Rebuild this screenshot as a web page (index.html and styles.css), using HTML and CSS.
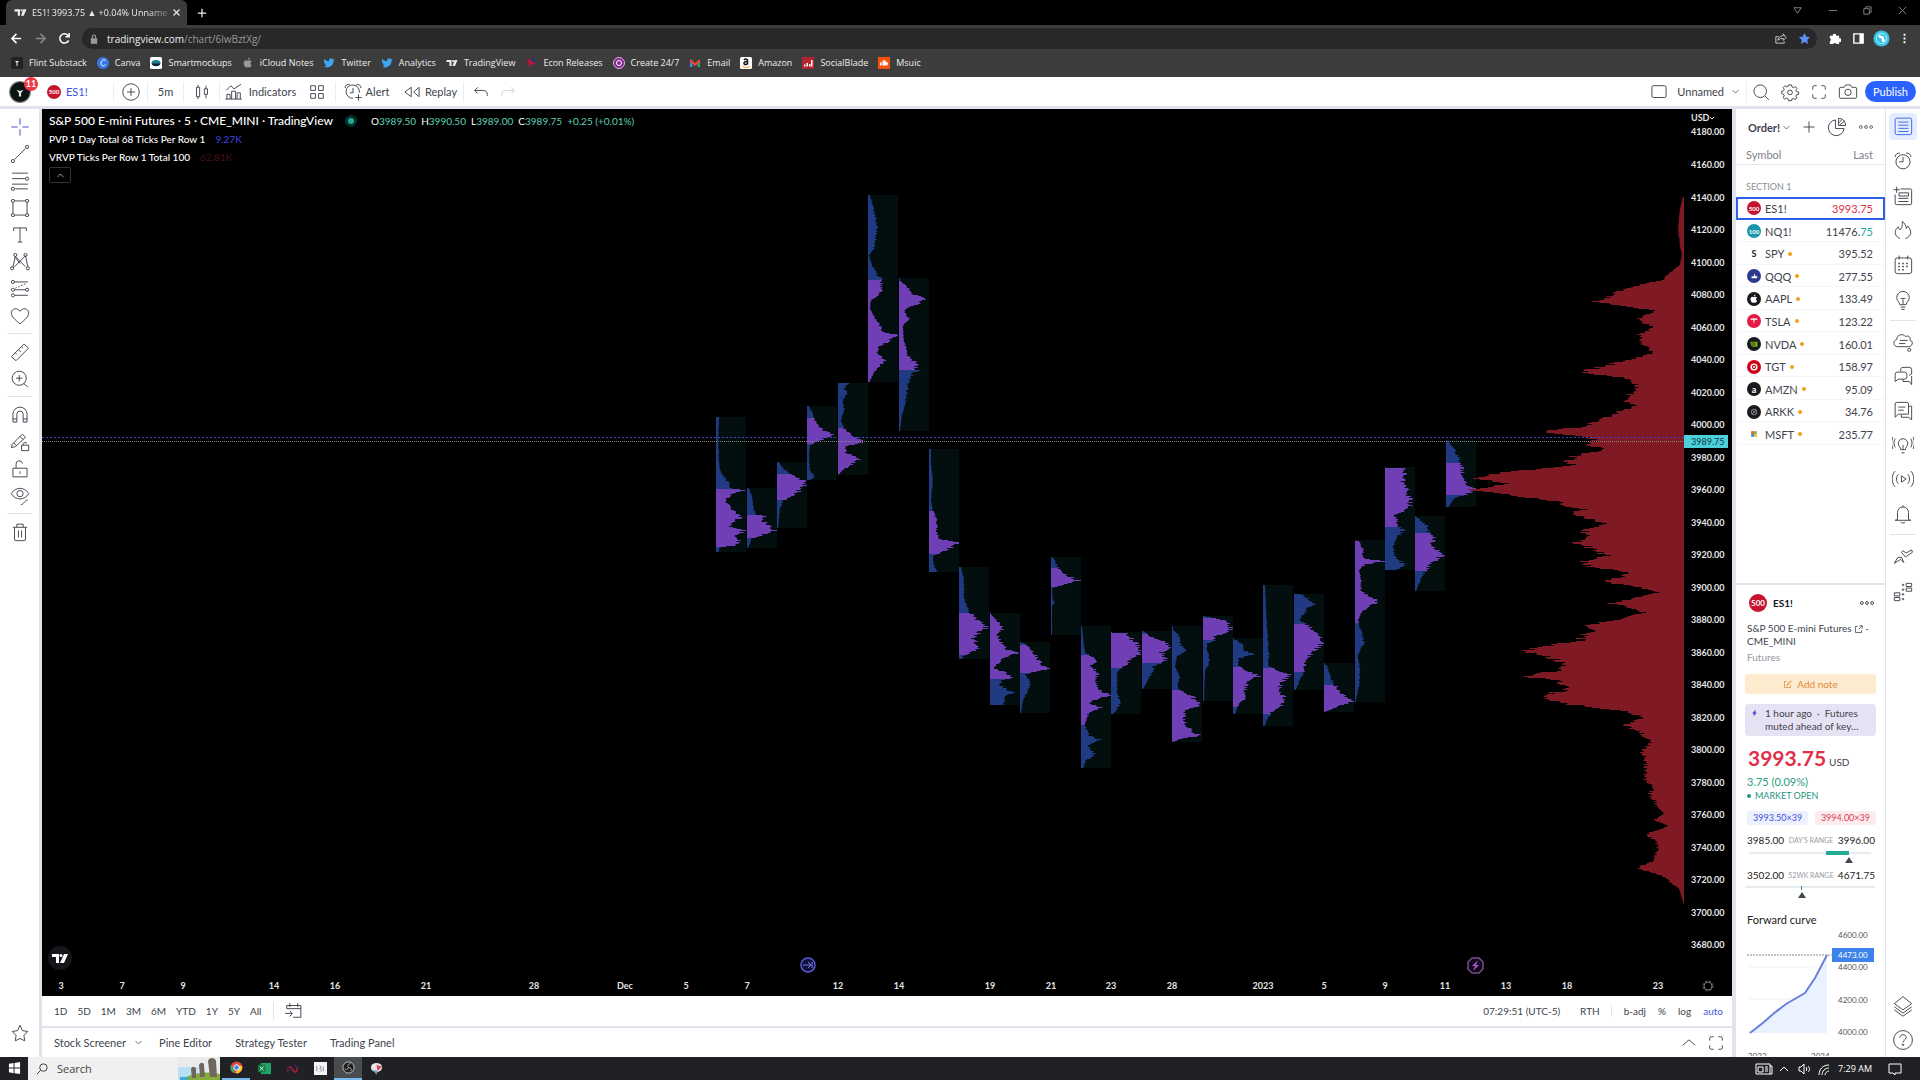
FILE: index.html
```
<!DOCTYPE html>
<html lang="en">
<head>
    <meta charset="UTF-8">
    <meta name="viewport" content="width=device-width, initial-scale=1.0">
    <title>ES1! 3993.75 ▲ +0.04% Unnamed</title>
    <link rel="stylesheet" href="styles.css">
</head>
<body>
    <!-- shared icons -->
    <svg class="defs" aria-hidden="true">
        <symbol id="tv" viewBox="0 0 24 24"><path fill="currentColor" d="M1 6h10v12H7v-8H1zM17 6h6l-5 12h-5z"/><circle cx="14" cy="8" r="2" fill="currentColor"/></symbol>
        <symbol id="bird" viewBox="0 0 24 24"><path fill="#3ea6f2" d="M23 5c-1 .4-1.700.6-2.600.7 1-.6 1.600-1.400 2-2.500-.9.5-1.800.9-2.900 1.100A4.500 4.500 0 0 0 11.800 8.500C8 8.300 4.600 6.500 2.300 3.700c-1.200 2-.6 4.700 1.400 6-.7 0-1.400-.2-2-.6 0 2.200 1.500 4.100 3.600 4.500-.7.200-1.300.2-2 .1.600 1.800 2.200 3.100 4.200 3.100A9 9 0 0 1 1 18.700 13 13 0 0 0 21 7.300c.8-.6 1.500-1.400 2-2.300z"/></symbol>
        <symbol id="apple" viewBox="0 0 24 24"><path fill="currentColor" d="M17 13c0-3 2-4 2.500-4.500-1.500-2-3.500-2.200-4.500-2.200-1.500 0-2.500 1-3.500 1s-2-1-3.500-1C5.500 6.300 3.500 8.500 3.500 12s2.500 9 5 9c1.200 0 1.800-.9 3.200-.9 1.500 0 1.900.9 3.200.9 2 0 3.600-3 4.300-5-1.200-.5-2.200-1.500-2.200-3zM14.500 4.500C15.300 3.500 15.500 2 15.400 1c-1.500.2-3.400 1.500-3.400 4.200 1 .1 2-.3 2.500-.7z"/></symbol>
        <symbol id="chevron" viewBox="0 0 12 12"><path d="M2 4l4 4 4-4"/></symbol>
        <symbol id="full" viewBox="0 0 28 28"><path d="M6 11V8a2 2 0 0 1 2-2h3M17 6h3a2 2 0 0 1 2 2v3M22 17v3a2 2 0 0 1-2 2h-3M11 22H8a2 2 0 0 1-2-2v-3"/></symbol>
        <symbol id="gear" viewBox="0 0 28 28"><path d="M12 5h4l.6 2.700 1.900.8L20.900 7 23 9.500l-1.500 2.300.6 1.700L25 14v3l-2.900.6-.8 1.700 1.500 2.300-2.500 2.100-2.200-1.500-1.700.7L16 25h-4l-.5-2.500-1.800-.7-2.300 1.400-2.200-2.200 1.500-2.200-.8-1.800L3.500 16v-3l2.400-.7.8-1.700L5.200 8.300 7.500 6l2.200 1.500 1.800-.7z"/><circle cx="14" cy="14.500" r="3"/></symbol>
        <symbol id="dots" viewBox="0 0 28 28"><circle cx="6" cy="14" r="2.200"/><circle cx="14" cy="14" r="2.200"/><circle cx="22" cy="14" r="2.200"/></symbol>
        <symbol id="bolt" viewBox="0 0 12 12"><path fill="currentColor" stroke="none" d="M8 0L2 7h3l-1 5 6-7H7z"/></symbol>
    </svg>

    <header class="tabs">
        <div class="tab">
            <svg class="favicon"><use href="#tv"/></svg>
            <span class="tab-title">ES1! 3993.75 ▲ +0.04% Unname</span>
            <button class="tab-close" aria-label="Close tab"><svg viewBox="0 0 12 12"><path d="M2 2l8 8M10 2l-8 8"/></svg></button>
        </div>
        <button class="tab-new" aria-label="New tab"><svg viewBox="0 0 12 12"><path d="M6 1v10M1 6h10"/></svg></button>
        <div class="window-controls">
            <svg viewBox="0 0 12 12"><path d="M2 3h8L6 9z"/></svg>
            <svg viewBox="0 0 12 12"><path d="M2 6h9"/></svg>
            <svg viewBox="0 0 12 12"><path d="M2 4h6v6H2zM4 4V2h6v6H8"/></svg>
            <svg viewBox="0 0 12 12"><path d="M2 2l8 8M10 2l-8 8"/></svg>
        </div>
    </header>

    <div class="nav">
        <svg class="nav-icon" viewBox="0 0 14 14"><path d="M12 7H2M7 2L2 7l5 5"/></svg>
        <svg class="nav-icon off" viewBox="0 0 14 14"><path d="M2 7h10M7 2l5 5-5 5"/></svg>
        <svg class="nav-icon" viewBox="0 0 14 14"><path d="M11.500 9A5 5 0 1 1 11 4M12 1v4H8"/></svg>
        <div class="omnibox">
            <svg class="lock" viewBox="0 0 10 12"><path fill="#999" d="M1 5h8v7H1z"/><path fill="none" stroke="#999" stroke-width="1.500" d="M3 5V3a2 2 0 0 1 4 0v2"/></svg>
            <a href="#">tradingview.com<span>/chart/6lwBztXg/</span></a>
            <svg class="share" viewBox="0 0 14 14"><path d="M5 5H2v7h9v-2M4 9c1-4 4-5 6-5V2l3 4-3 3V7C8 7 6 7 4 9z"/></svg>
            <svg class="star" viewBox="0 0 14 14"><path fill="#5b8ff0" d="M7 1l2 4 4 .5-3 3 .8 4.500L7 10.900 3.200 13 4 8.500l-3-3L5 5z"/></svg>
        </div>
        <svg class="ext" viewBox="0 0 14 14"><path fill="#fff" d="M2 4h3a2 2 0 1 1 4 0h3v3a2 2 0 1 1 0 3.500V13H9a2 2 0 0 0-3.500 0H2v-3a2 2 0 0 0 0-3.500z"/></svg>
        <svg class="ext" viewBox="0 0 14 14"><path fill="none" stroke="#fff" stroke-width="1.500" d="M2 2h10v10H2z"/><path fill="#fff" d="M8 2h4v10H8z"/></svg>
        <svg class="profile" viewBox="0 0 18 18"><circle cx="9" cy="9" r="8.500" fill="#35c3e8"/><circle cx="9" cy="9" r="5.500" fill="none" stroke="#bff0fc"/><path fill="#fff" d="M6 5l5 2 2 5-3 1-1-4-3-1z"/></svg>
        <svg class="ext" viewBox="0 0 14 14"><path fill="#fff" d="M6 2h2v2H6zM6 6h2v2H6zM6 10h2v2H6z"/></svg>
    </div>

    <nav class="bookmarks">
        <a href="#"><svg viewBox="0 0 24 24"><rect width="24" height="24" rx="3" fill="#222"/><path fill="#eee" d="M8 8h8l-3 3v7h-2v-7z"/></svg>Flint Substack</a>
        <a href="#"><svg viewBox="0 0 24 24"><circle cx="12" cy="12" r="12" fill="#3577e8"/><path fill="none" stroke="#fff" stroke-width="2" d="M17 8c-2-5-9-2-9 5 0 6 6 6 9 2"/></svg>Canva</a>
        <a href="#"><svg viewBox="0 0 24 24"><rect width="24" height="24" rx="3" fill="#fff"/><ellipse cx="12" cy="12" rx="9" ry="6" fill="#1b7f93"/><path fill="#123" d="M3 13h18c-3 7-15 7-18 0z"/></svg>Smartmockups</a>
        <a href="#"><svg class="gray"><use href="#apple"/></svg>iCloud Notes</a>
        <a href="#"><svg><use href="#bird"/></svg>Twitter</a>
        <a href="#"><svg><use href="#bird"/></svg>Analytics</a>
        <a href="#"><svg><use href="#tv"/></svg>TradingView</a>
        <a href="#"><svg viewBox="0 0 24 24"><path fill="#c4122f" d="M3 3l9 4 8-5-2 8 5 5-9-1-5 7-1-8-6-4 6-1z"/><path fill="#24367a" d="M14 3h7v8h-7z"/></svg>Econ Releases</a>
        <a href="#"><svg viewBox="0 0 24 24"><circle cx="12" cy="12" r="11" fill="#7d2b8c" stroke="#f0a6e8" stroke-width="2"/><circle cx="12" cy="12" r="5" fill="none" stroke="#fff" stroke-width="2"/></svg>Create 24/7</a>
        <a href="#"><svg viewBox="0 0 24 24"><path fill="#4285f4" d="M2 6h5v14H2z"/><path fill="#34a853" d="M17 6h5v14h-5z"/><path fill="#ea4335" d="M2 4l10 8 10-8v6l-10 8L2 10z"/></svg>Email</a>
        <a href="#"><svg viewBox="0 0 24 24"><rect width="24" height="24" rx="3" fill="#fff"/><path fill="none" stroke="#111" stroke-width="3" d="M8 6c2-3 7-3 7 1v8M15 9c-8-1-9 6-4 6 3 0 4-2 4-3"/><path fill="none" stroke="#f7a01c" stroke-width="2" d="M4 18c5 4 11 4 16 0"/></svg>Amazon</a>
        <a href="#"><svg viewBox="0 0 24 24"><rect width="24" height="24" fill="#b3262f"/><path fill="#fff" d="M4 15h3v4H4zM9 12h3v7H9zM14 14h3v5h-3zM18 6h3v13h-3z"/></svg>SocialBlade</a>
        <a href="#"><svg viewBox="0 0 24 24"><rect width="24" height="24" fill="#f8510c"/><path fill="#fff" d="M4 11h2v6H4zM7 9h2v8H7zM10 7c5-2 6 2 6 3 5-1 5 7 1 7h-7z"/></svg>Msuic</a>
    </nav>

    <div class="toolbar">
        <div class="user"><svg viewBox="0 0 20 20"><circle cx="10" cy="10" r="9.500" fill="#0c1413" stroke="#888"/><path fill="#dfe5e2" d="M7 8l3 1 3-1-2 3v3H9v-3z"/></svg><b>11</b></div>
        <button class="symbol"><i class="logo red">500</i>ES1!</button>
        <button class="w34 sep-l"><svg class="icon" viewBox="0 0 28 28"><circle cx="14" cy="14" r="10.500"/><path d="M14 9v10M9 14h10"/></svg></button>
        <button class="w36 sep-l">5m</button>
        <button class="w36 sep-l"><svg class="icon" viewBox="0 0 28 28"><path d="M7 8h4v12H7zM9 5v3M9 20v3M17 10h4v7h-4zM19 6v4M19 17v5"/></svg></button>
        <button class="w80 sep-l"><svg class="icon" viewBox="0 0 28 28"><path d="M5 23v-6h4v6M11 23V13h5v10M18 23V15h4v8M3 23h21M4 12l6-6 4 4 9-6"/></svg>Indicators</button>
        <button class="w36"><svg class="icon" viewBox="0 0 28 28"><path d="M6 6h6v6H6zM16 6h6v6h-6zM6 16h6v6H6zM16 16h6v6h-6z"/></svg></button>
        <button class="w60 sep-l"><svg class="icon" viewBox="0 0 28 28"><path d="M14 22a8.500 8.500 0 1 1 8-7M14 9v6h-4M4 9a4 4 0 0 1 6-4M18 5a4 4 0 0 1 6 4M21 17v8M17 21h8"/></svg>Alert</button>
        <button class="w68"><svg class="icon" viewBox="0 0 28 28"><path d="M13 8v12l-8-6zM23 8v12l-7-6z"/></svg>Replay</button>
        <button class="w34 sep-l"><svg class="icon" viewBox="0 0 28 28"><path d="M10 8l-4 4 4 4M6 12h11c3 0 5 2 5 5v2"/></svg></button>
        <button class="off"><svg class="icon" viewBox="0 0 28 28"><path d="M18 8l4 4-4 4M22 12H11c-3 0-5 2-5 5v2"/></svg></button>
        <span class="grow"></span>
        <button class="layout"><svg class="icon" viewBox="0 0 28 28"><rect x="5" y="6" width="18" height="15" rx="2"/></svg><span>Unnamed</span><svg class="chev"><use href="#chevron"/></svg></button>
        <button class="w29 sep-l"><svg class="icon" viewBox="0 0 28 28"><circle cx="13" cy="13" r="8"/><path d="M19 19l5 5"/></svg></button>
        <button class="w29"><svg class="icon"><use href="#gear"/></svg></button>
        <button class="w29"><svg class="icon"><use href="#full"/></svg></button>
        <button class="w29"><svg class="icon" viewBox="0 0 28 28"><path d="M5 8h4l2-3h6l2 3h4a2 2 0 0 1 2 2v10a2 2 0 0 1-2 2H5a2 2 0 0 1-2-2V10a2 2 0 0 1 2-2z"/><circle cx="14" cy="14.500" r="4"/></svg></button>
        <button class="publish">Publish</button>
    </div>

    <main class="app">
        <aside class="drawing">
            <button class="blue" aria-label="Cross"><svg class="icon" viewBox="0 0 28 28"><path d="M14 3v8M14 17v8M3 14h8M17 14h8"/></svg></button>
            <button aria-label="Trend line"><svg class="icon" viewBox="0 0 28 28"><circle cx="5" cy="23" r="2"/><circle cx="23" cy="5" r="2"/><path d="M7 21L21 7"/></svg></button>
            <button aria-label="Fib"><svg class="icon" viewBox="0 0 28 28"><path d="M4 4h20M4 11h17M4 18h20M8 24h16"/><circle cx="23" cy="11" r="2"/><circle cx="5" cy="24" r="2"/></svg></button>
            <button aria-label="Rectangle"><svg class="icon" viewBox="0 0 28 28"><path d="M7 5h14M7 23h14M5 7v14M23 7v14"/><circle cx="5" cy="5" r="2"/><circle cx="23" cy="5" r="2"/><circle cx="5" cy="23" r="2"/><circle cx="23" cy="23" r="2"/></svg></button>
            <button aria-label="Text"><svg class="icon" viewBox="0 0 28 28"><path d="M6 9V5h16v4M14 5v18M11 23h6"/></svg></button>
            <button aria-label="Pattern"><svg class="icon" viewBox="0 0 28 28"><path d="M5 21L8 7l13 13M7 20L21 6l3 14M8 8l6 8"/><circle cx="8" cy="5" r="2"/><circle cx="21" cy="5" r="2"/><circle cx="4" cy="22" r="2"/><circle cx="24" cy="22" r="2"/></svg></button>
            <button aria-label="Prediction"><svg class="icon" viewBox="0 0 28 28"><path d="M7 5h17M7 15h14M7 22h17"/><path stroke-dasharray="2 2" d="M8 13l14-6"/><circle cx="5" cy="5" r="2"/><circle cx="5" cy="15" r="2"/><circle cx="23" cy="15" r="2"/><circle cx="5" cy="22" r="2"/></svg></button>
            <button aria-label="Favourites"><svg class="icon" viewBox="0 0 28 28"><path d="M14 24C8 19 3 15 3 10c0-6 8-7 11-2 3-5 11-4 11 2 0 5-5 9-11 14z"/></svg></button>
            <hr>
            <button aria-label="Measure"><svg class="icon" viewBox="0 0 28 28"><path d="M3 20L19 4l6 5L9 25zM8 15l2 2M12 11l3 3M16 7l2 2"/></svg></button>
            <button aria-label="Zoom"><svg class="icon" viewBox="0 0 28 28"><circle cx="13" cy="13" r="9"/><path d="M19 20l5 4M13 9v8M9 13h8"/></svg></button>
            <hr>
            <button aria-label="Magnet"><svg class="icon" viewBox="0 0 28 28"><path d="M5 23V13a9 9 0 0 1 18 0v10h-5V13a4 4 0 0 0-8 0v10zM5 19h5M18 19h5"/></svg></button>
            <button aria-label="Keep drawing"><svg class="icon" viewBox="0 0 28 28"><path d="M4 17L17 4l4 4L8 20l-5 1zM6 15l4 4M14 7l4 4M16 18h9v7h-9zM18 18v-2a3 3 0 0 1 5 0"/></svg></button>
            <button aria-label="Lock"><svg class="icon" viewBox="0 0 28 28"><path d="M5 13h18v11H5zM9 13V8a4 4 0 0 1 8-1M14 17v3"/></svg></button>
            <button aria-label="Hide"><svg class="icon" viewBox="0 0 28 28"><path d="M3 11c5-9 17-9 22 0-5 9-17 9-22 0zM15 25c4 0 3-4 9-6"/><circle cx="14" cy="11" r="4"/></svg></button>
            <hr>
            <button aria-label="Delete"><svg class="icon" viewBox="0 0 28 28"><path d="M5 8h18M10 8V4h8v4M7 8v15a2 2 0 0 0 2 2h10a2 2 0 0 0 2-2V8M12 12v9M16 12v9"/></svg></button>
            <button class="fav" aria-label="Toolbar"><svg class="icon" viewBox="0 0 28 28"><path d="M14 4l3 7 7 1-5 5 1 7-6-3-6 3 1-7-5-5 7-1z"/></svg></button>
        </aside>

        <section class="center">
            <div class="chart">
                <svg id="chart" viewBox="42 109 1690 887" preserveAspectRatio="xMaxYMin meet"></svg>
                <div class="legend">
                    <p class="title">S&amp;P 500 E-mini Futures · 5 · CME_MINI · TradingView<i></i>
                        <span>O<em>3989.50</em></span><span>H<em>3990.50</em></span><span>L<em>3989.00</em></span><span>C<em>3989.75</em></span><span><em>+0.25 (+0.01%)</em></span></p>
                    <p>PVP 1 Day Total 68 Ticks Per Row 1<b class="c-blue">9.27K</b></p>
                    <p>VRVP Ticks Per Row 1 Total 100<b class="c-red">62.81K</b></p>
                    <button aria-label="Collapse"><svg><use href="#chevron"/></svg></button>
                </div>
            </div>
            <div class="ranges">
                <div class="spans"><button>1D</button><button>5D</button><button>1M</button><button>3M</button><button>6M</button><button>YTD</button><button>1Y</button><button>5Y</button><button>All</button></div>
                <button class="goto" aria-label="Go to"><svg class="icon" viewBox="0 0 28 28"><path d="M6 11V7h18v15H14M6 11h18M10 4v5M20 4v5M4 17h9M10 14l3 3-3 4"/></svg></button>
                <span class="grow"></span>
                <span>07:29:51 (UTC-5)</span><button class="rth">RTH</button><button class="badj">b-adj</button><button>%</button><button>log</button><button class="c-link">auto</button>
            </div>
            <div class="panels">
                <button>Stock Screener<svg class="chev"><use href="#chevron"/></svg></button><button>Pine Editor</button><button>Strategy Tester</button><button>Trading Panel</button>
                <span class="grow"></span>
                <svg class="icon up" viewBox="0 0 28 28"><path d="M6 17l8-7 8 7"/></svg>
                <svg class="icon"><use href="#full"/></svg>
            </div>
        </section>

        <aside class="side">
            <section class="watch">
                <div class="watch-head"><b>Order!</b><svg class="chev"><use href="#chevron"/></svg><svg class="icon plus" viewBox="0 0 28 28"><path d="M14 7v14M7 14h14"/></svg><svg class="icon" viewBox="0 0 28 28"><path d="M12 5a10 10 0 1 0 11 11H12zM16 3v9h9c0-5-4-9-9-9zM16 9l5-5M17 12l7-6"/></svg><svg class="icon more"><use href="#dots"/></svg></div>
                <table>
                    <thead>
                        <tr class="cols"><th>Symbol</th><th>Last</th></tr>
                        <tr class="section"><th colspan="2">SECTION 1</th></tr>
                    </thead>
                    <tbody>
                        <tr class="active"><td><i class="logo red">500</i>ES1!</td><td class="c-down">3993.75</td></tr>
                        <tr><td><i class="logo teal">100</i>NQ1!</td><td>11476.<span class="c-up">75</span></td></tr>
                        <tr class="dot"><td><i class="logo plain">S</i>SPY</td><td>395.52</td></tr>
                        <tr class="dot"><td><i class="logo navy"><svg viewBox="0 0 14 14"><path fill="#fff" d="M3 8l4-1V3l2 4 3 1-1 2H4z"/></svg></i>QQQ</td><td>277.55</td></tr>
                        <tr class="dot"><td><i class="logo black"><svg><use href="#apple"/></svg></i>AAPL</td><td>133.49</td></tr>
                        <tr class="dot"><td><i class="logo tsla"><svg viewBox="0 0 14 14"><path fill="#fff" d="M2 4c3-1 7-1 10 0l-1 2-3-1-1 7-1-7-3 1z"/></svg></i>TSLA</td><td>123.22</td></tr>
                        <tr class="dot"><td><i class="logo black"><svg viewBox="0 0 14 14"><path fill="#76a51b" d="M2 4h10v7H6c-3 0-4-3-4-7z"/><circle cx="6" cy="7" r="2" fill="none" stroke="#141"/></svg></i>NVDA</td><td>160.01</td></tr>
                        <tr class="dot"><td><i class="logo tgt"><svg viewBox="0 0 14 14"><circle cx="7" cy="7" r="4" fill="none" stroke="#fff" stroke-width="2"/><circle cx="7" cy="7" r="1.500" fill="#fff"/></svg></i>TGT</td><td>158.97</td></tr>
                        <tr class="dot"><td><i class="logo black">a</i>AMZN</td><td>95.09</td></tr>
                        <tr class="dot"><td><i class="logo black"><svg viewBox="0 0 14 14"><circle cx="7" cy="7" r="4" fill="none" stroke="#aaa"/><path stroke="#aaa" d="M4 10l6-6M5 5l5 4"/></svg></i>ARKK</td><td>34.76</td></tr>
                        <tr class="dot"><td><i class="logo plain"><svg viewBox="0 0 14 14"><path fill="#e8643c" d="M3 3h4v4H3z"/><path fill="#8cb54a" d="M7 3h4v4H7z"/><path fill="#4a90d9" d="M3 7h4v4H3z"/><path fill="#f5b83d" d="M7 7h4v4H7z"/></svg></i>MSFT</td><td>235.77</td></tr>
                    </tbody>
                </table>
            </section>
            <section class="detail">
                <div class="detail-head"><i class="logo red big">500</i><b>ES1!</b><svg class="icon more"><use href="#dots"/></svg></div>
                <p class="name">S&amp;P 500 E-mini Futures <svg viewBox="0 0 12 12"><path d="M5 2H2v8h8V7M7 1h4v4M11 1L6 6"/></svg> ·<br>CME_MINI</p>
                <p class="kind">Futures</p>
                <button class="note"><svg viewBox="0 0 12 12"><path d="M5 2H2v8h8V7M5 8l1-3 4-4 1 1-4 4z"/></svg>Add note</button>
                <a class="news" href="#"><svg><use href="#bolt"/></svg><span>1 hour ago &nbsp;·&nbsp; Futures<br>muted ahead of key…</span></a>
                <p class="price"><b>3993.75</b>USD</p>
                <p class="change">3.75 (0.09%)</p>
                <p class="open"><i></i>MARKET OPEN</p>
                <div class="quotes"><span class="bid">3993.50×39</span><span class="ask">3994.00×39</span></div>
                <div class="range"><b>3985.00</b><span>DAY'S RANGE</span><b>3996.00</b></div>
                <svg class="bar" viewBox="0 0 130 16"><path fill="#e8eaf0" d="M4 4h122v2H4z"/><path fill="#22ab94" d="M81 3h23v4H81z"/><path fill="#434651" d="M104 9l4 6h-8z"/></svg>
                <div class="range"><b>3502.00</b><span>52WK RANGE</span><b>4671.75</b></div>
                <svg class="bar" viewBox="0 0 130 16"><path fill="#e8eaf0" d="M0 3h130v2H0z"/><path fill="#2a9d92" d="M56 3h1v4h-1z"/><path fill="#434651" d="M57 9l4 6h-8z"/></svg>
                <h3>Forward curve</h3>
                <svg class="curve" viewBox="0 0 132 128">
                    <path class="grid" d="M4 39h66M4 71h66M4 104h66"/>
                    <path fill="#e9f2fe" d="M5 105l14-11 9-8 13-10 19-11 10-15 12-23v78z"/>
                    <path class="line" d="M5 105l14-11 9-8 13-10 19-11 10-15 12-23"/>
                    <path class="dash" d="M2 27h86"/>
                    <path fill="#3b82ea" d="M87 20h42v14H87z"/>
                    <text x="93" y="10">4600.00</text><text class="now" x="93" y="30">4473.00</text><text x="93" y="42">4400.00</text><text x="93" y="75">4200.00</text><text x="93" y="107">4000.00</text>
                    <text x="3" y="131">2023</text><text x="66" y="131">2024</text>
                </svg>
            </section>
        </aside>

        <aside class="rail">
            <div class="group first">
                <button class="on"><svg class="icon" viewBox="0 0 28 28"><rect x="4" y="4" width="21" height="21" rx="2"/><path d="M8 9h13M8 13h13M8 17h13M8 21h13"/></svg></button>
                <button><svg class="icon" viewBox="0 0 28 28"><circle cx="14" cy="15" r="9"/><path d="M14 9v6H9M4 9a5 5 0 0 1 6-5M18 4a5 5 0 0 1 6 5"/></svg></button>
                <button><svg class="icon" viewBox="0 0 28 28"><path d="M4 12v11a2 2 0 0 0 2 2h17a2 2 0 0 0 2-2V7a2 2 0 0 0-2-2H11M6 2v8M2 6h8M9 10h12v4H9zM8 17h13M8 21h13"/></svg></button>
                <button><svg class="icon" viewBox="0 0 28 28"><path d="M10 25c-8-4-7-11-2-15 1 2 1 3 2 4 4-4 3-7 3-11 4 3 5 6 5 9l2-3c6 7 5 13-3 16"/></svg></button>
                <button><svg class="icon" viewBox="0 0 28 28"><rect x="4" y="5" width="21" height="20" rx="3"/><path d="M9 2v5M20 2v5"/><path stroke-dasharray="2 3" stroke-width="2" d="M8 12h14M8 16h14M8 20h9"/></svg></button>
                <button><svg class="icon" viewBox="0 0 28 28"><path d="M10 20c0-3-4-5-4-9a8 8 0 0 1 16 0c0 4-4 6-4 9zM11 23h6M12 26h4M14 20v-7M11 12h6"/></svg></button>
            </div>
            <hr>
            <div class="group second">
                <button><svg class="icon" viewBox="0 0 28 28"><path d="M7 20c-5 0-7-8-1-9 0-7 9-8 11-4 5-2 7 2 6 5 5 1 3 8-2 8zM10 12h10M9 16h8"/><circle cx="22" cy="24" r="2"/></svg></button>
                <button><svg class="icon" viewBox="0 0 28 28"><path d="M4 21v-9a3 3 0 0 1 3-3h9a3 3 0 0 1 3 3v3a3 3 0 0 1-3 3H8zM11 8V6a3 3 0 0 1 3-3h8a3 3 0 0 1 3 3v4a3 3 0 0 1-3 3M14 18v3h8l3 4V14"/></svg></button>
                <button><svg class="icon" viewBox="0 0 28 28"><path d="M4 22V5a2 2 0 0 1 2-2h13a2 2 0 0 1 2 2v13H8zM21 8h4v17l-4-3h-9v-3M8 9h9M8 13h7"/></svg></button>
                <button><svg class="icon" viewBox="0 0 28 28"><path d="M11 20c0-3-3-5-3-8a6 6 0 0 1 12 0c0 3-3 5-3 8zM12 24h4M14 20v-6M4 6c-2 4-2 7 0 11M1 4c-2 5-2 10 0 15M24 6c2 4 2 7 0 11M27 4c2 5 2 10 0 15"/></svg></button>
                <button><svg class="icon" viewBox="0 0 28 28"><path d="M12 10l6 4-6 4zM8 8c-3 3-3 9 0 12M20 8c3 3 3 9 0 12M4 4c-5 5-5 15 0 20M24 4c5 5 5 15 0 20"/></svg></button>
                <button><svg class="icon" viewBox="0 0 28 28"><path d="M7 21V12a7 7 0 0 1 14 0v9l3 1H4zM11 24c1 2 5 2 6 0M14 3v2"/></svg></button>
            </div>
            <hr>
            <div class="group third">
                <button><svg class="icon" viewBox="0 0 28 28"><path d="M3 22l8-5 4 4-3-7-5 1zM12 8l5 6 9-6-1-3-7 4-4-3z"/></svg></button>
                <button><svg class="icon" viewBox="0 0 28 28"><path d="M18 3h7v4h-7zM18 9h7v4h-7zM3 15h7v4H3zM3 21h7v4H3z"/><circle cx="14" cy="5" r="1"/><circle cx="14" cy="11" r="1"/><circle cx="14" cy="17" r="1"/><circle cx="14" cy="23" r="1"/></svg></button>
            </div>
            <span class="grow"></span>
            <button><svg class="icon" viewBox="0 0 28 28"><path d="M14 2l11 9-11 8-11-8zM3 15l11 8 11-8M3 19l11 8 11-8"/></svg></button>
            <button><svg class="icon" viewBox="0 0 28 28"><circle cx="14" cy="14" r="12"/><path d="M10 11c0-5 8-5 8 0 0 3-4 3-4 6"/><circle cx="14" cy="20" r="1"/></svg></button>
        </aside>
    </main>

    <footer class="taskbar">
        <button class="start" aria-label="Start"><svg viewBox="0 0 14 14"><path fill="#fff" d="M1 2l5-1v5H1zM7 1l6-1v6H7zM1 7h5v5l-5-1zM7 7h6v6l-6-1z"/></svg></button>
        <label class="search"><svg viewBox="0 0 14 14"><circle cx="8" cy="6" r="4"/><path d="M5 9l-4 4"/></svg><input type="text" placeholder="Search" aria-label="Search"></label>
        <svg class="art" viewBox="0 0 42 23"><path fill="#e9ecea" d="M0 0h42v23H0z"/><path fill="#b9dff2" d="M0 10h20v13H0z"/><path fill="#86ad3c" d="M4 23c8-8 30-9 38-6v6z"/><path fill="#6f675f" d="M13 12c1-3 4-3 5 0v9h-4zM21 8c1-3 5-3 5 0l1 12h-5zM30 4c1-4 7-4 8 0l1 16h-7z"/><path fill="#3fa8d8" d="M2 20h10l-4 3H2z"/></svg>
        <button class="run"><svg viewBox="0 0 14 14"><circle cx="7" cy="7" r="6.500" fill="#e0463a"/><path fill="#3ca555" d="M1 4l4 6-1 3C0 11 0 7 1 4z"/><path fill="#f7c928" d="M13 5c1 5-3 9-7 8l3-5V5z"/><circle cx="7" cy="7" r="3" fill="#4a86e8" stroke="#fff"/></svg></button>
        <button><svg viewBox="0 0 14 14"><path fill="#21a366" d="M3 1h11v12H3z"/><path fill="#107c41" d="M0 3h8v8H0z"/><path stroke="#fff" d="M2 5l4 4M6 5L2 9"/></svg></button>
        <button><svg viewBox="0 0 14 14"><path fill="none" stroke="#9c1c34" stroke-width="2" d="M2 10c0-6 3-6 5-2s5 4 5-3"/><path stroke="#35244c" stroke-width="2" d="M1 5l3 5M9 3l3 3"/></svg></button>
        <button><svg viewBox="0 0 14 14"><path fill="#f4f4f4" d="M0 0h14v14H0z"/><path fill="none" stroke="#888" d="M3 4v6M6 4c2 0 2 3 0 3 3 0 3 3 0 3M10 5v5"/></svg></button>
        <button class="run focus"><svg viewBox="0 0 14 14"><circle cx="7" cy="7" r="6" fill="#1c1c1c" stroke="#ccc"/><path fill="none" stroke="#bbb" d="M7 7c-2-2 0-4 2-4M7 7c3 0 4 2 2 4M7 7c-1 3-3 3-4 1"/></svg></button>
        <button><svg viewBox="0 0 14 14"><ellipse cx="7" cy="6" rx="6" ry="5" fill="#e9e5ec"/><path fill="#d34a5a" d="M7 3l6 2-5 5z"/><path fill="#6c9fc4" d="M3 8l5 2-1 4z"/></svg></button>
        <span class="grow"></span>
        <div class="tray">
            <svg viewBox="0 0 18 14"><path d="M1 2h14v10H1zM15 4h2v8h-2M3 5h5v5H3zM10 5h3M10 7h3M10 9h3"/></svg>
            <svg viewBox="0 0 18 14"><path d="M5 9l4-4 4 4"/></svg>
            <svg viewBox="0 0 18 14"><path d="M4 5h2l3-3v10L6 9H4zM11 5c1 1 1 3 0 4M13 4c2 2 2 4 0 6"/></svg>
            <svg viewBox="0 0 18 14"><path d="M4 13C4 7 8 3 14 3M7 13c0-4 3-7 7-7M10 13c0-2 2-4 4-4"/></svg>
            <time>7:29 AM</time>
            <svg viewBox="0 0 18 14"><path d="M3 2h12v9H9v2l-2-2H3z"/></svg>
        </div>
    </footer>
    <script src="script.js"></script>
</body>
</html>
```
FILE: styles.css
```
* {
    box-sizing: border-box;
}
body {
    margin: 0;
    height: 100vh;
    overflow: hidden;
    display: grid;
    grid-template-rows: 25px 25px 27px 29px minmax(0, 1fr) 23px;
    grid-template-columns: 100%;
    font: 11px Lato, "Open Sans", sans-serif;
    color: #40434d;
    background: #fff;
}
button {
    font: inherit;
    color: inherit;
    background: none;
    border: 0;
    padding: 0;
    display: flex;
    align-items: center;
    justify-content: center;
}
a {
    color: inherit;
    text-decoration: none;
}
p, h3 {
    margin: 0;
}
i, em {
    font-style: normal;
}
svg {
    flex: none;
    fill: none;
}
.defs {
    position: absolute;
    width: 0;
    height: 0;
}
.grow {
    flex: 1;
}
.icon {
    width: 22px;
    height: 22px;
    stroke: currentColor;
    stroke-width: 1.2;
}
.chev {
    width: 9px;
    height: 9px;
    stroke: currentColor;
}
.c-up { color: #22ab94; }
.c-down { color: #e0304c; }
.c-link { color: #4a55e0; }

/* browser */
.tabs {
    display: flex;
    background: #000;
    color: #eee;
    font: 9px "Open Sans", sans-serif;
    padding-left: 6px;
}
.tab {
    display: flex;
    align-items: center;
    width: 181px;
    padding: 0 8px;
    gap: 5px;
    background: #3c3c3c;
    border-radius: 6px 6px 0 0;
}
.favicon {
    width: 13px;
    height: 13px;
}
.tab-title {
    white-space: nowrap;
    mask-image: linear-gradient(to right, #000 85%, #0004);
}
.tab-close {
    margin-left: auto;
}
.tab-close svg {
    width: 9px;
    stroke: #eee;
    stroke-width: 1.5;
}
.tab-new {
    width: 30px;
}
.tab-new svg {
    width: 10px;
    stroke: #eee;
    stroke-width: 1.5;
}
.window-controls {
    display: flex;
    margin-left: auto;
    padding: 5px 12px;
    gap: 24px;
}
.window-controls svg {
    width: 11px;
    height: 11px;
    stroke: #888;
}
.nav {
    display: flex;
    align-items: center;
    background: #3c3c3c;
    color: #eee;
    font: 10px "Open Sans", sans-serif;
    padding: 2px 9px 0 10px;
    gap: 11px;
}
.nav-icon {
    width: 13px;
    height: 13px;
    stroke: #fff;
    stroke-width: 1.6;
}
.nav-icon.off {
    stroke: #888;
}
.omnibox {
    flex: 1;
    display: flex;
    align-items: center;
    height: 21px;
    padding: 0 6px;
    background: #282828;
    border-radius: 11px;
}
.omnibox span {
    color: #999;
}
.lock {
    width: 8px;
    height: 10px;
    margin: 0 9px 0 2px;
}
.share {
    width: 13px;
    stroke: #ccc;
    margin: 0 11px 0 auto;
}
.star {
    width: 13px;
}
.ext {
    width: 13px;
}
.profile {
    width: 17px;
    margin: 0 -3px;
}
.bookmarks {
    display: flex;
    align-items: center;
    background: #3c3c3c;
    color: #eee;
    font: 9px "Open Sans", sans-serif;
    padding: 0 0 2px 11px;
    gap: 10px;
}
.bookmarks a {
    display: flex;
    align-items: center;
    gap: 6px;
}
.bookmarks svg {
    width: 12px;
    height: 12px;
}
.bookmarks .gray {
    color: #999;
}

/* top toolbar */
.toolbar {
    display: flex;
    align-items: center;
    padding: 0 4px 0 9px;
}
.toolbar button {
    height: 20px;
}
.user {
    position: relative;
    width: 38px;
    height: 22px;
}
.user svg {
    width: 22px;
}
.user b {
    position: absolute;
    left: 15px;
    top: -4px;
    width: 14px;
    height: 14px;
    border-radius: 7px;
    background: #f23645;
    color: #fff;
    font-size: 9px;
    line-height: 14px;
    text-align: center;
}
.toolbar .symbol {
    width: 66px;
    justify-content: flex-start;
    gap: 5px;
    color: #3a55e0;
}
.logo {
    display: inline-flex;
    align-items: center;
    justify-content: center;
    width: 14px;
    height: 14px;
    border-radius: 50%;
    color: #fff;
    font-size: 6px;
    font-weight: bold;
}
.logo svg {
    width: 10px;
    height: 10px;
}
.logo.big {
    width: 18px;
    height: 18px;
    font-size: 8px;
}
.red { background: #c4122f; }
.teal { background: #1a94ad; }
.navy { background: #2b3a8c; }
.black { background: #17191c; font-size: 9px; }
.tsla { background: #e31b45; }
.tgt { background: #cc0017; }
.logo.plain { color: #222; font-size: 9px; }
.sep-l {
    border-left: 1px solid #eceef2;
}
.toolbar .w29 { width: 29px; }
.toolbar .w34 { width: 34px; }
.toolbar .w36 { width: 36px; }
.toolbar .w60 { width: 60px; gap: 2px; }
.toolbar .w68 { width: 68px; gap: 2px; }
.toolbar .w80 { width: 80px; gap: 4px; }
.toolbar .off {
    color: #d0d3da;
}
.layout {
    gap: 7px;
    margin-right: 6px;
}
.toolbar .publish {
    width: 51px;
    height: 21px;
    margin-left: 3px;
    border-radius: 11px;
    background: #2962ff;
    color: #fff;
}

/* main area */
.app {
    display: flex;
    padding-top: 3px;
    background: #e0e3eb;
}
.drawing {
    display: flex;
    flex-direction: column;
    width: 39px;
    margin-right: 3px;
    padding-top: 4px;
    background: #fff;
}
.drawing button {
    height: 27px;
}
.drawing .blue {
    color: #3c46c8;
}
.drawing hr, .rail hr {
    width: 26px;
    border: 0;
    border-top: 1px solid #e0e3eb;
    margin: 4px auto;
}
.drawing .fav {
    margin: auto 0 11px;
}
.center {
    flex: 1;
    min-width: 0;
    display: flex;
    flex-direction: column;
}
.chart {
    position: relative;
    flex: 1;
    min-height: 0;
    background: #000;
}
#chart {
    display: block;
    width: 100%;
    height: 100%;
    font: bold 9px Lato, sans-serif;
}
#chart text {
    fill: #e6e6e6;
}
#chart .date {
    text-anchor: middle;
}
#chart .last {
    fill: #0b3a40;
    font-weight: normal;
}
.legend {
    position: absolute;
    left: 7px;
    top: 3px;
    color: #fff;
    font-size: 10px;
    line-height: 18px;
    font-weight: 500;
}
.legend .title {
    display: flex;
    align-items: center;
    font-size: 12px;
}
.title i {
    width: 6px;
    height: 6px;
    margin: 0 17px 0 15px;
    border-radius: 50%;
    background: #22ab94;
    box-shadow: 0 0 0 3px #06302a;
}
.title span {
    margin-right: 5px;
    font-size: 10px;
    font-weight: normal;
}
.title em {
    color: #5fd0b8;
}
.legend b {
    margin-left: 10px;
    font-weight: normal;
}
.legend .c-blue { color: #3f46e0; }
.legend .c-red { color: #4d0e1b; }
.legend button {
    width: 22px;
    height: 16px;
    margin-top: 1px;
    border: 1px solid #333;
    border-radius: 2px;
}
.legend button svg {
    width: 9px;
    height: 9px;
    stroke: #ccc;
    transform: rotate(180deg);
}
.ranges, .panels {
    display: flex;
    align-items: center;
    background: #fff;
}
.ranges {
    height: 30px;
    padding: 0 9px 0 12px;
    gap: 12px;
    font-size: 10px;
}
.spans {
    display: flex;
    gap: 10px;
}
.goto {
    height: 18px;
    padding-left: 8px;
    border-left: 1px solid #e0e3eb;
}
.rth {
    padding: 0 11px 0 8px;
    border-right: 1px solid #e0e3eb;
}
.panels {
    height: 29px;
    margin-top: 2px;
    padding: 0 5px 0 12px;
    gap: 23px;
}
.panels .chev {
    margin: 0 -7px 0 8px;
}
.panels .up {
    margin-right: -18px;
}

/* watchlist and details */
.side {
    display: flex;
    flex-direction: column;
    width: 149px;
    margin: 0 1px 0 4px;
    overflow: hidden;
}
.watch {
    height: 474px;
    background: #fff;
}
.watch-head {
    display: flex;
    align-items: center;
    height: 36px;
    padding: 0 10px 0 12px;
}
.watch-head .chev {
    margin: 0 7px 0 2px;
}
.watch-head .icon {
    margin-right: 6px;
}
.watch-head .more, .more {
    width: 18px;
    margin: 0 0 0 auto;
}
.watch table, .watch thead {
    display: block;
}
.watch tr {
    display: flex;
    align-items: center;
    justify-content: space-between;
}
.watch th, .watch td {
    padding: 0 10px 0 9px;
    font-weight: normal;
}
.watch .cols {
    height: 20px;
    color: #7c7f88;
    border-bottom: 1px solid #e6e8ee;
}
.watch .section {
    height: 32px;
    padding-top: 10px;
    color: #8b8e98;
    font-size: 9px;
}
.watch thead th {
    padding: 0 12px 0 10px;
}
/* heights are handed out evenly, 11 rows in 248px */
.watch tbody {
    display: grid;
    grid-template-rows: repeat(11, 1fr);
    height: 248px;
}
.watch tbody tr {
    border: 2px solid transparent;
    border-bottom: 1px solid #f5f6f8;
}
.watch tbody .active {
    border: 2px solid #2f5fe6;
}
.watch tbody td {
    display: flex;
    align-items: center;
}
.watch tbody .logo {
    margin-right: 4px;
}
.watch .dot td:first-child::after {
    content: "";
    width: 4px;
    height: 4px;
    margin-left: 4px;
    border-radius: 50%;
    background: #f0a01c;
}
.detail {
    flex: 1;
    min-height: 0;
    margin-top: 2px;
    padding: 8px 9px 0;
    overflow: hidden;
    background: #fff;
    font-size: 10px;
}
.detail-head {
    display: flex;
    align-items: center;
    gap: 6px;
    padding-left: 4px;
    height: 20px;
    color: #131722;
}
.name {
    margin: 9px 0 0 2px;
    line-height: 13px;
    white-space: nowrap;
}
.name svg, .note svg {
    width: 9px;
    height: 9px;
    stroke: currentColor;
    vertical-align: middle;
}
.kind {
    margin: 3px 2px 2px;
    line-height: 13px;
    color: #9598a1;
}
.note {
    width: 100%;
    height: 20px;
    margin-top: 10px;
    gap: 5px;
    border-radius: 3px;
    background: #fdebd0;
    color: #e08a3c;
}
.news {
    display: flex;
    gap: 7px;
    height: 32px;
    margin-top: 10px;
    padding: 3px 6px;
    line-height: 13px;
    white-space: nowrap;
    border-radius: 4px;
    background: #e6e2f3;
}
.news svg {
    width: 7px;
    height: 12px;
    color: #4b3fc0;
}
.price {
    margin: 10px 0 0 3px;
    line-height: 24px;
}
.price b {
    margin-right: 3px;
    font-size: 21px;
    color: #e0304c;
}
.change {
    margin-left: 2px;
    font-size: 11px;
    line-height: 15px;
    color: #2a9d82;
}
.open {
    display: flex;
    align-items: center;
    margin-left: 2px;
    gap: 4px;
    font-size: 9px;
    line-height: 14px;
    color: #1f9680;
}
.open i {
    width: 4px;
    height: 4px;
    border-radius: 50%;
    background: #1f9680;
}
.quotes {
    display: flex;
    justify-content: space-between;
    margin: 8px 0 8px 2px;
    font-size: 9px;
    line-height: 14px;
}
.quotes span {
    padding: 0 6px;
    border-radius: 3px;
}
.bid { color: #3f52d9; background: #edf1fe; }
.ask { color: #d93a52; background: #fdecee; }
.range {
    display: flex;
    align-items: center;
    justify-content: space-between;
    margin: 0 1px 0 2px;
    height: 14px;
}
.range b {
    font-weight: normal;
    color: #222;
}
.range span {
    font-size: 7px;
    color: #9a9da6;
}
.bar {
    display: block;
    width: 130px;
    height: 16px;
    margin: 1px 0 4px;
}
.detail h3 {
    margin: 13px 0 0 2px;
    font-size: 11px;
    line-height: 16px;
    font-weight: normal;
    color: #222;
}
.curve {
    display: block;
    width: 132px;
    height: 128px;
}
.curve text {
    fill: #555;
    font-size: 8px;
}
.curve .now { fill: #fff; }
.grid { stroke: #eef0f4; }
.dash { stroke: #889; stroke-dasharray: 2 1; }
.line { stroke: #6a80dc; stroke-width: 2; }
.rail {
    display: flex;
    flex-direction: column;
    width: 34px;
    background: #fff;
}
.group {
    display: flex;
    flex-direction: column;
}
.group button {
    flex: 1;
}
.first { height: 208px; }
.second { height: 206px; }
.third { height: 70px; }
.rail button {
    height: 26px;
    margin: 4px 3px;
    border-radius: 4px;
}
.rail .on {
    color: #3f63e8;
    background: #e3edfd;
}
.rail hr {
    margin: 3px auto 4px;
}

/* windows taskbar */
.taskbar {
    display: flex;
    background: #202124;
    color: #fff;
}
.taskbar button {
    width: 28px;
}
.taskbar button svg {
    width: 13px;
    height: 13px;
}
.search {
    display: flex;
    align-items: center;
    gap: 8px;
    width: 150px;
    padding-left: 8px;
    background: #f0f0f0;
}
.search svg {
    width: 13px;
    stroke: #333;
}
.search input {
    width: 90px;
    border: 0;
    padding: 0;
    background: none;
    font: 11px "Open Sans", sans-serif;
}
.search input::placeholder {
    color: #444;
    opacity: 1;
}
.art {
    width: 42px;
    margin-right: 2px;
}
.taskbar .run {
    border-bottom: 2px solid #76b9ed;
}
.taskbar .focus {
    background: #4a4d50;
}
.tray {
    display: flex;
    align-items: center;
    gap: 2px;
    padding-right: 16px;
    font: 9px "Open Sans", sans-serif;
}
.tray svg {
    width: 18px;
    height: 14px;
    stroke: #fff;
}
.tray time {
    margin: 0 12px 0 3px;
}
```
FILE: script.js
```
var NS = "http://www.w3.org/2000/svg";
var chart = document.getElementById("chart");

function add(tag, attrs, text) {
    var el = document.createElementNS(NS, tag);
    for (var k in attrs) el.setAttribute(k, attrs[k]);
    if (text) el.textContent = text;
    chart.appendChild(el);
    return el;
}

// day profiles: top, bottom, value area top, value area bottom, [y, width] pairs
var days = [
    [417, 552, 489, 547, [417,3,440,2,460,3,470,4,478,9,488,17,490,26,494,16,499,10,508,14,513,22,517,27,520,20,526,14,530,28,536,18,540,25,545,20,547,4,552,2]],
    [488, 548, 515, 538, [488,2,495,5,505,6,514,9,515,18,520,14,524,22,530,29,535,14,538,5,548,1]],
    [462, 528, 474, 500, [460,1,468,6,474,14,480,28,484,30,488,22,492,21,497,14,500,6,508,3,528,1]],
    [406, 480, 418, 444, [406,2,412,5,418,7,425,12,430,18,434,28,437,20,442,8,445,3,455,2,470,3,477,8,480,2]],
    [383, 475, 428, 474, [383,10,388,6,392,10,400,5,410,6,420,3,428,6,434,14,441,26,446,8,452,8,458,22,464,14,470,4,474,1]],
    [195, 382, 280, 382, [195,2,205,5,220,8,232,9,248,6,255,1,265,4,275,10,280,14,292,13,300,3,308,2,316,6,325,12,330,14,335,29,340,22,346,12,352,8,360,18,366,12,372,6,380,2]],
    [278, 431, 281, 370, [281,2,288,10,293,12,299,29,306,12,310,5,318,10,325,4,340,5,355,9,363,18,368,16,370,21,372,15,380,10,400,7,415,3,430,1]],
    [449, 572, 511, 554, [449,2,465,2,480,4,500,2,510,4,520,8,530,8,538,9,542,30,546,24,552,12,556,4,565,5,572,8]],
    [567, 659, 613, 655, [567,2,580,5,595,5,605,7,612,10,614,15,620,18,626,28,632,20,638,14,643,18,648,20,652,12,656,4,659,3]],
    [613, 705, 613, 679, [614,1,622,9,628,13,634,7,642,12,648,15,653,27,658,14,664,7,668,4,672,16,677,22,680,12,685,10,692,22,698,14,704,14]],
    [642, 713, 645, 673, [643,5,650,12,656,16,662,20,668,29,672,12,674,6,682,10,688,9,700,3,713,1]],
    [557, 635, 568, 587, [558,3,565,6,568,8,574,14,580,29,584,12,588,1,600,2,602,4,606,1,635,1]],
    [626, 768, 655, 725, [626,1,645,3,652,4,659,16,665,10,672,16,680,14,688,16,695,28,700,12,703,8,707,20,712,8,720,5,725,4,735,8,739,18,745,6,754,14,760,5,768,2]],
    [632, 714, 632, 668, [633,16,640,22,645,26,653,28,658,20,665,14,668,10,672,6,690,6,703,9,710,5,714,1]],
    [631, 689, 634, 663, [631,2,636,8,642,24,648,27,652,20,660,24,663,20,665,12,672,10,680,5,689,1]],
    [626, 742, 690, 741, [630,2,635,7,643,8,650,13,656,5,665,3,678,8,684,5,690,8,696,20,704,28,710,14,718,12,726,14,735,28,738,10,741,3]],
    [616, 701, 618, 640, [616,3,620,20,625,26,630,28,636,12,640,12,643,4,650,4,655,6,663,6,670,2,701,1]],
    [638, 714, 667, 707, [640,4,645,10,650,12,654,20,658,6,665,5,668,10,676,26,682,14,690,12,698,12,703,6,708,4,714,2]],
    [585, 726, 668, 714, [585,2,610,3,640,5,655,6,665,5,670,14,675,28,682,18,690,16,698,22,705,18,712,8,716,6,722,3,726,1]],
    [594, 690, 624, 672, [594,8,603,20,610,12,620,6,625,14,632,22,638,26,645,28,652,18,660,12,668,10,672,10,678,6,690,2]],
    [663, 712, 685, 712, [665,3,675,6,684,10,688,14,694,18,701,30,706,14,711,2]],
    [540, 702, 541, 623, [541,4,548,8,554,8,558,10,561,28,564,10,570,4,580,6,590,6,596,14,600,24,605,16,612,6,620,3,630,6,642,9,655,3,670,5,685,4,700,1]],
    [467, 570, 468, 527, [468,20,480,18,490,22,500,26,507,24,515,10,525,14,530,18,540,10,546,8,556,10,565,20,570,10]],
    [516, 591, 533, 571, [517,2,525,12,532,14,537,20,545,16,555,28,560,20,566,14,571,10,578,6,591,1]],
    [440, 507, 463, 495, [441,2,448,8,456,12,463,16,470,16,478,17,484,20,490,30,494,20,498,8,507,2]]
];

// visible range profile: [row, width] pairs, drawn from the right edge
var range = [35,1,60,4,100,6,140,4,155,2,178,4,195,14,212,22,218,38,230,58,243,74,258,88,266,60,276,28,290,44,298,44,310,30,325,44,345,42,355,36,366,32,378,52,390,74,404,102,412,85,418,60,425,50,440,48,455,55,470,58,475,46,490,64,500,75,512,90,522,95,530,145,540,110,548,90,560,95,573,76,580,105,596,120,604,110,608,130,620,188,632,208,643,170,645,190,655,212,665,180,672,155,680,130,690,115,697,98,705,115,715,100,728,80,740,100,755,95,768,112,780,90,795,78,805,100,815,100,825,72,832,55,840,65,850,82,860,50,872,25,885,50,895,74,905,55,915,40,925,60,935,75,940,95,955,95,975,105,985,135,997,162,1005,140,1025,118,1040,130,1050,162,1060,125,1077,115,1088,135,1097,145,1105,125,1115,100,1125,60,1137,40,1155,62,1165,45,1180,40,1190,32,1205,42,1240,38,1270,40,1285,30,1300,35,1320,28,1340,20,1355,30,1367,15,1385,38,1400,28,1420,26,1440,30,1455,46,1462,38,1475,20,1490,12,1500,5,1515,3,1535,0];

function widthAt(p, y) {
    for (var i = 0; i < p.length - 2; i += 2) {
        if (y >= p[i] && y < p[i + 2]) {
            return p[i + 1] + (p[i + 3] - p[i + 1]) * (y - p[i]) / (p[i + 2] - p[i]);
        }
    }
    return y < p[0] ? 0 : p[p.length - 1];
}

function jitter(n) {
    var s = Math.sin(n * 127.1) * 43758.5453;
    return s - Math.floor(s) - 0.5;
}

days.forEach(function (d, i) {
    var x = Math.round(716.2 + i * 30.4);
    add("rect", { x: x, y: d[0], width: 30, height: d[1] - d[0], fill: "#030e0f" });
    var blue = "", purple = "";
    for (var y = d[0]; y < d[1]; y++) {
        var w = widthAt(d[4], y);
        w = Math.min(30, Math.max(1, w + w * 0.3 * jitter(y + i * 31)));
        var bar = "M" + x + " " + y + "h" + w.toFixed(1) + "v1h-" + w.toFixed(1) + "z";
        if (y >= d[2] && y < d[3]) purple += bar; else blue += bar;
    }
    add("path", { d: blue, fill: "#203b82" });
    add("path", { d: purple, fill: "#703fb5" });
});

var red = "";
for (var y = 196; y < 905; y++) {
    var w = widthAt(range, (y - 180) / 0.472);
    w += Math.min(w, 90) * 0.14 * jitter(y);
    if (w > 0) red += "M1684 " + y + "h-" + w.toFixed(1) + "v1h" + w.toFixed(1) + "z";
}
add("path", { d: red, fill: "#7f1a25" });

add("path", { d: "M42 437.500H1684", stroke: "#4343c8", "stroke-dasharray": "2 2" });
add("path", { d: "M42 441.500H1684", stroke: "#8a8478", "stroke-dasharray": "1 1" });

// price scale
for (var p = 4180; p >= 3680; p -= 20) {
    add("text", { x: 1691, y: Math.round(168 + (4160 - p) * 1.626) }, p + ".00");
}
add("text", { x: 1691, y: 121 }, "USD");
add("path", { d: "M1710 117l2 2 2-2", fill: "none", stroke: "#e6e6e6" });
add("rect", { x: 1684, y: 435, width: 44, height: 13, fill: "#4dd0dc" });
add("text", { x: 1691, y: 445, "class": "last" }, "3989.75");

// time scale
var dates = [[61,"3"],[122,"7"],[183,"9"],[274,"14"],[335,"16"],[426,"21"],[534,"28"],[625,"Dec"],[686,"5"],[747,"7"],[838,"12"],[899,"14"],[990,"19"],[1051,"21"],[1111,"23"],[1172,"28"],[1263,"2023"],[1324,"5"],[1385,"9"],[1445,"11"],[1506,"13"],[1567,"18"],[1658,"23"]];
dates.forEach(function (d) {
    add("text", { x: d[0], y: 989, "class": "date" }, d[1]);
});

// markers and logo
add("circle", { cx: 808, cy: 965, r: 7, fill: "#10103a", stroke: "#5a5ad8", "stroke-width": 1.5 });
add("path", { d: "M803 965h8M808 962l3 3-3 3M812 962v6", stroke: "#7a7af0" });
add("path", { d: "M1472 958h7l4 4v7l-4 4h-7l-4-4v-7z", fill: "#12061a", stroke: "#77508c", "stroke-width": 1.5 });
add("path", { d: "M1478 960l-6 6h3l-2 5 6-6h-3z", fill: "#b04fd0" });
add("circle", { cx: 60, cy: 958, r: 12, fill: "#15161a" });
add("path", { d: "M52 954h7v9h-3v-6h-4zM64 954h4l-4 9h-4z", fill: "#fff" });
add("circle", { cx: 61, cy: 955.5, r: 1.5, fill: "#fff" });
add("circle", { cx: 1708, cy: 986, r: 4, stroke: "#777" });
add("circle", { cx: 1708, cy: 986, r: 5, stroke: "#777", "stroke-dasharray": "2 2" });
```
